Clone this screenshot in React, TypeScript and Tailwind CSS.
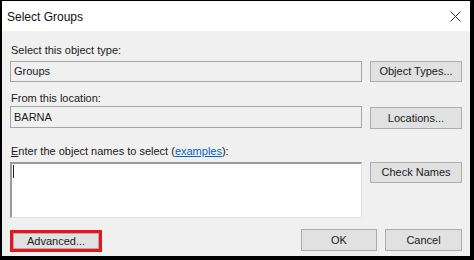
import React from 'react';

// Windows "Select Groups" picker dialog
const font = { fontFamily: '"Liberation Sans", Arial, sans-serif' };

function WinButton({ label, className = '' }: { label: string; className?: string }) {
  return (
    <div
      className={`flex items-center justify-center bg-[#e1e1e1] border border-[#adadad] text-[11px] text-[#1a1a1a] ${className}`}
    >
      {label}
    </div>
  );
}

export default function App() {
  return (
    <div className="w-[474px] h-[260px] bg-black pt-[1px] pl-[2px] pr-[4px] pb-[4px]" style={font}>
      <div className="w-[468px] h-[255px] flex flex-col bg-[#f0f0f0]">
        {/* Title bar */}
        <div className="h-[31px] bg-white flex items-center justify-between pl-[5px] pr-[8px]">
          <span className="text-[12px] text-[#111] pt-[1px]">Select Groups</span>
          <svg width="11" height="11" viewBox="0 0 11 11" className="mr-[1px]">
            <path d="M0.5 0.5 L10.5 10.5 M10.5 0.5 L0.5 10.5" stroke="#333" strokeWidth="1" fill="none" />
          </svg>
        </div>

        {/* Body */}
        <div className="flex-1 flex flex-col px-[8px] pt-[11px] pb-[4px]">
          <div className="h-[16px] leading-[16px] text-[11px] text-[#1a1a1a] pl-[1px]">Select this object type:</div>
          <div className="mt-[3px] flex gap-[8px]">
            <div className="w-[352px] h-[21px] border border-[#a5a5a5] bg-[#f0f0f0] flex items-center pl-[3px] text-[11px] text-[#1a1a1a]">
              Groups
            </div>
            <WinButton label="Object Types..." className="w-[92px] h-[21px]" />
          </div>

          <div className="mt-[8px] h-[16px] leading-[16px] text-[11px] text-[#1a1a1a] pl-[1px]">From this location:</div>
          <div className="flex gap-[8px]">
            <div className="w-[352px] h-[22px] border border-[#a5a5a5] bg-[#f0f0f0] flex items-center pl-[3px] text-[11px] text-[#1a1a1a]">
              BARNA
            </div>
            <WinButton label="Locations..." className="w-[92px] h-[22px] mt-[1px]" />
          </div>

          <div className="mt-[14px] h-[16px] leading-[16px] text-[11px] text-[#1a1a1a] pl-[1px]">
            <span className="underline">E</span>nter the object names to select (
            <span className="text-[#0066cc] underline">examples</span>):
          </div>
          <div className="mt-[3px] flex gap-[8px]">
            <div className="w-[352px] h-[56px] bg-white border-t-2 border-l-2 border-t-[#9a9a9a] border-l-[#9a9a9a] border-r border-b border-r-[#e3e3e3] border-b-[#e3e3e3] pl-[1px] pt-[1px]">
              <div className="w-[1px] h-[13px] bg-[#222]" />
            </div>
            <WinButton label="Check Names" className="w-[92px] h-[21px]" />
          </div>

          {/* Footer */}
          <div className="mt-[11px] flex items-start">
            <div className="w-[92px] h-[22px] border-[3px] border-[#e8141c] mt-[1px]">
              <WinButton label="Advanced..." className="w-full h-full" />
            </div>
            <div className="flex-1" />
            <WinButton label="OK" className="w-[76px] h-[22px]" />
            <WinButton label="Cancel" className="w-[77px] h-[22px] ml-[8px]" />
          </div>
        </div>
      </div>
    </div>
  );
}
